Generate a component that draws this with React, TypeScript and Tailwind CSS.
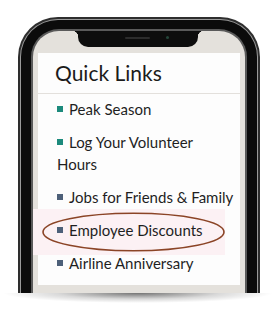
import React from "react";

const items = [
  { lines: ["Peak Season"], color: "bg-[#1c8a7c]" },
  { lines: ["Log Your Volunteer", "Hours"], color: "bg-[#1c8a7c]" },
  { lines: ["Jobs for Friends & Family"], color: "bg-[#4d6079]" },
  { lines: ["Employee Discounts"], color: "bg-[#4d6079]", circled: true },
  { lines: ["Airline Anniversary"], color: "bg-[#4d6079]" },
];

export default function App() {
  return (
    <div className="w-[280px] h-[327px] bg-white pt-[17px] overflow-hidden" style={{ fontFamily: "Lato, 'Open Sans', sans-serif" }}>
      <div className="ml-[18px] w-[242px] h-[276px] bg-[#2e2e2e] rounded-t-[40px] px-[2px] pt-[2px] flex flex-col">
        <div className="flex-1 bg-[#9a9a9a] rounded-t-[38px] px-[1px] pt-[1px] flex flex-col">
          <div className="flex-1 bg-[#0b0b0b] rounded-t-[37px] px-[10px] pt-[9px] flex flex-col">
            <div className="flex-1 bg-[#5a5a5a] rounded-t-[28px] px-[2px] pt-[2px] flex flex-col">
              <div className="flex-1 relative bg-[#e4e1dc] rounded-t-[26px] overflow-hidden px-[5px] pt-[22px] pb-[8px] flex flex-col">
                {/* notch */}
                <div className="absolute left-[45px] top-0 w-[120px] h-[16px] bg-[#0d0d0d] rounded-b-[10px]">
                  <div className="absolute left-[47px] top-[6px] w-[25px] h-[2px] rounded-full bg-[#2c2c2c]" />
                  <div className="absolute left-[88px] top-[5px] w-[3px] h-[3px] rounded-full bg-[#24463a]" />
                </div>
                <div className="absolute left-[39px] top-0 w-[6px] h-[6px] bg-[radial-gradient(circle_at_0%_100%,transparent_6px,#0d0d0d_6.5px)]" />
                <div className="absolute left-[165px] top-0 w-[6px] h-[6px] bg-[radial-gradient(circle_at_100%_100%,transparent_6px,#0d0d0d_6.5px)]" />
                {/* card */}
                <div className="flex-1 bg-[#fdfdfd] relative">
                  <div className="h-[40px] pl-[17px] pt-[6px] text-[21px] leading-[28px] text-[#1b1b1b]">Quick Links</div>
                  <div className="h-[1px] bg-[#e3e0dc]" />
                  <ul className="pl-[19px] pt-[4px] flex flex-col gap-[11px] text-[15px] leading-[22px] text-[#1f1f1f]">
                    {items.map((it) => (
                      <li key={it.lines[0]} className="relative">
                        {it.circled && (
                          <>
                            <div className="absolute left-[-24px] top-[-10px] w-[192px] h-[46px] bg-[#fcf1f4]" />
                            <svg className="absolute left-[-15px] top-[-7px]" width="183" height="40" viewBox="0 0 183 40">
                              <ellipse cx="91.5" cy="20" rx="90.5" ry="18.8" fill="none" stroke="#8b4426" strokeWidth="1.6" />
                            </svg>
                          </>
                        )}
                        <span className="relative">
                          <span className={`inline-block w-[6px] h-[6px] mr-[6px] align-[3px] ${it.color}`} />
                          {it.lines[0]}
                          {it.lines[1] && (
                            <>
                              <br />
                              {it.lines[1]}
                            </>
                          )}
                        </span>
                      </li>
                    ))}
                  </ul>
                </div>
              </div>
            </div>
          </div>
        </div>
      </div>
      <div className="ml-[3px] w-[270px] h-[10px] bg-[radial-gradient(ellipse_50%_100%_at_50%_0%,rgba(0,0,0,0.55),rgba(0,0,0,0.15)_60%,transparent_100%)]" />
    </div>
  );
}
